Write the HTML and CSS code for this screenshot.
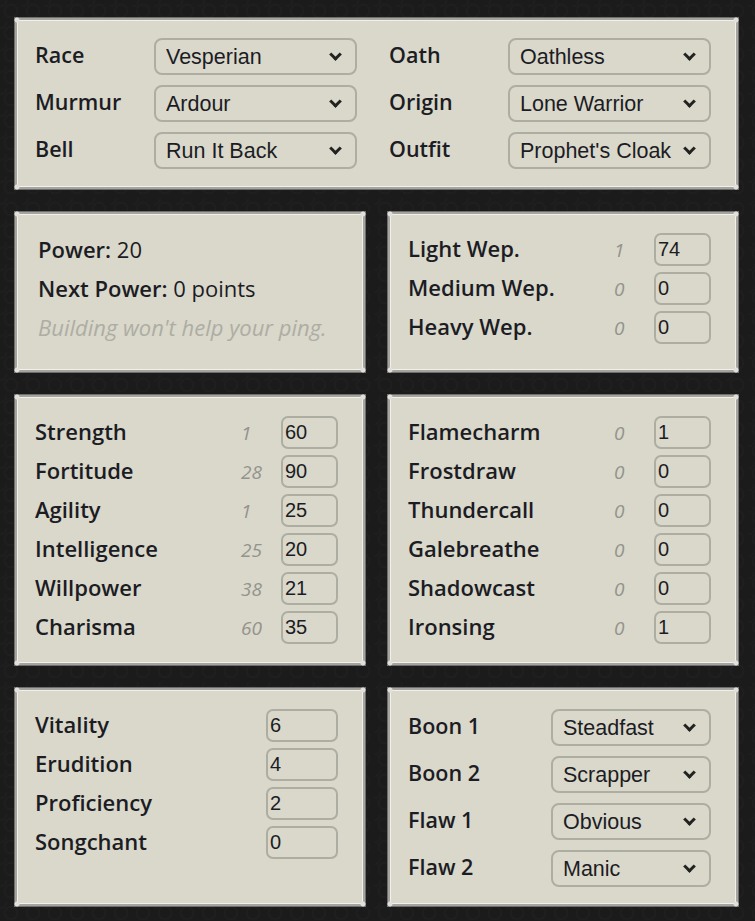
FILE: index.html
```html
<!DOCTYPE html>
<html lang="en">
<head>
  <meta charset="UTF-8" />
  <meta name="viewport" content="width=device-width, initial-scale=1.0"/>
  <title>Build Sheet</title>
  <link rel="stylesheet" href="styles.css">
</head>
<body>
  <div class="sheet">

    <!-- PICKS -->
    <section class="panel panel-wide">
      <div class="pick-grid">
        <div class="pick-col">
          <label class="pick"><span class="pick-name">Race</span><span class="select-wrap"><select><option>Vesperian</option></select></span></label>
          <label class="pick"><span class="pick-name">Murmur</span><span class="select-wrap"><select><option>Ardour</option></select></span></label>
          <label class="pick"><span class="pick-name">Bell</span><span class="select-wrap"><select><option>Run It Back</option></select></span></label>
        </div>
        <div class="pick-col">
          <label class="pick"><span class="pick-name">Oath</span><span class="select-wrap"><select><option>Oathless</option></select></span></label>
          <label class="pick"><span class="pick-name">Origin</span><span class="select-wrap"><select><option>Lone Warrior</option></select></span></label>
          <label class="pick"><span class="pick-name">Outfit</span><span class="select-wrap"><select><option>Prophet's Cloak</option></select></span></label>
        </div>
      </div>
    </section>

    <!-- POWER -->
    <section class="panel power">
      <div class="power-line"><strong>Power:</strong> 20</div>
      <div class="power-line"><strong>Next Power:</strong> 0 points</div>
      <div class="power-line hint">Building won't help your ping.</div>
    </section>

    <!-- WEAPONS -->
    <section class="panel stats">
      <div class="stat"><span class="stat-name">Light Wep.</span><span class="stat-req">1</span><input class="stat-input" value="74"></div>
      <div class="stat"><span class="stat-name">Medium Wep.</span><span class="stat-req">0</span><input class="stat-input" value="0"></div>
      <div class="stat"><span class="stat-name">Heavy Wep.</span><span class="stat-req">0</span><input class="stat-input" value="0"></div>
    </section>

    <!-- ATTRIBUTES -->
    <section class="panel stats">
      <div class="stat"><span class="stat-name">Strength</span><span class="stat-req">1</span><input class="stat-input" value="60"></div>
      <div class="stat"><span class="stat-name">Fortitude</span><span class="stat-req">28</span><input class="stat-input" value="90"></div>
      <div class="stat"><span class="stat-name">Agility</span><span class="stat-req">1</span><input class="stat-input" value="25"></div>
      <div class="stat"><span class="stat-name">Intelligence</span><span class="stat-req">25</span><input class="stat-input" value="20"></div>
      <div class="stat"><span class="stat-name">Willpower</span><span class="stat-req">38</span><input class="stat-input" value="21"></div>
      <div class="stat"><span class="stat-name">Charisma</span><span class="stat-req">60</span><input class="stat-input" value="35"></div>
    </section>

    <!-- ATTUNEMENTS -->
    <section class="panel stats">
      <div class="stat"><span class="stat-name">Flamecharm</span><span class="stat-req">0</span><input class="stat-input" value="1"></div>
      <div class="stat"><span class="stat-name">Frostdraw</span><span class="stat-req">0</span><input class="stat-input" value="0"></div>
      <div class="stat"><span class="stat-name">Thundercall</span><span class="stat-req">0</span><input class="stat-input" value="0"></div>
      <div class="stat"><span class="stat-name">Galebreathe</span><span class="stat-req">0</span><input class="stat-input" value="0"></div>
      <div class="stat"><span class="stat-name">Shadowcast</span><span class="stat-req">0</span><input class="stat-input" value="0"></div>
      <div class="stat"><span class="stat-name">Ironsing</span><span class="stat-req">0</span><input class="stat-input" value="1"></div>
    </section>

    <!-- INVESTMENTS -->
    <section class="panel stats stats-plain">
      <div class="stat"><span class="stat-name">Vitality</span><input class="stat-input" value="6"></div>
      <div class="stat"><span class="stat-name">Erudition</span><input class="stat-input" value="4"></div>
      <div class="stat"><span class="stat-name">Proficiency</span><input class="stat-input" value="2"></div>
      <div class="stat"><span class="stat-name">Songchant</span><input class="stat-input" value="0"></div>
    </section>

    <!-- BOONS / FLAWS -->
    <section class="panel traits">
      <label class="pick"><span class="pick-name">Boon 1</span><span class="select-wrap"><select><option>Steadfast</option></select></span></label>
      <label class="pick"><span class="pick-name">Boon 2</span><span class="select-wrap"><select><option>Scrapper</option></select></span></label>
      <label class="pick"><span class="pick-name">Flaw 1</span><span class="select-wrap"><select><option>Obvious</option></select></span></label>
      <label class="pick"><span class="pick-name">Flaw 2</span><span class="select-wrap"><select><option>Manic</option></select></span></label>
    </section>

  </div>
</body>
</html>
```

FILE: styles.css
```css
:root {
  --bg: #1b1b1b;
  --card: #d9d8cb;
  --text: #1c1c24;
  --line: #aeada2;
  --muted: #94938c;
}

body {
  margin: 0;
  font-family: 'Open Sans', 'Noto Sans', sans-serif;
  color: var(--text);
  background-color: var(--bg);
  background-image:
    radial-gradient(circle at 50% 50%, transparent 5px, #202020 6px, transparent 8px),
    radial-gradient(circle at 0 0, transparent 5px, #1f1f1f 6px, transparent 8px);
  background-size: 22px 22px;
}

.sheet {
  display: grid;
  grid-template-columns: 1fr 1fr;
  gap: 23px;
  padding: 18px 17px 14px 15px;
}

/* panels */
.panel {
  position: relative;
  background: var(--card);
  border: 2px solid #a6a49f;
  box-shadow: inset 0 0 0 1px #f1f0ea, 0 0 0 1px #6f6d6b;
  padding: 19px 25px 19px 18px;
}

.panel::before {
  content: "";
  position: absolute;
  inset: -4px;
  pointer-events: none;
  background:
    radial-gradient(circle, #e2e0dc 2px, transparent 3px) left top / 8px 8px no-repeat,
    radial-gradient(circle, #e2e0dc 2px, transparent 3px) right top / 8px 8px no-repeat,
    radial-gradient(circle, #e2e0dc 2px, transparent 3px) left bottom / 8px 8px no-repeat,
    radial-gradient(circle, #e2e0dc 2px, transparent 3px) right bottom / 8px 8px no-repeat;
}

.panel-wide {
  grid-column: 1 / -1;
  padding-top: 18px;
  padding-bottom: 18px;
}

/* selects */
.pick-grid {
  display: grid;
  grid-template-columns: 1fr 1fr;
  gap: 32px;
}

.pick-col, .traits {
  display: flex;
  flex-direction: column;
  gap: 10px;
}

.traits {
  padding-bottom: 17px;
}

.pick {
  display: grid;
  grid-template-columns: 119px 1fr;
  align-items: center;
}

.traits .pick {
  grid-template-columns: 143px 1fr;
}

.pick-name, .stat-name {
  font-size: 21.5px;
  font-weight: 600;
  padding-bottom: 5px;
}

.stat-name {
  font-size: 22px;
  padding-bottom: 3px;
}

.select-wrap {
  position: relative;
  display: block;
}

.select-wrap::after {
  content: "";
  position: absolute;
  right: 17px;
  top: 50%;
  width: 6px;
  height: 6px;
  margin-top: -7px;
  border-right: 3px solid #222;
  border-bottom: 3px solid #222;
  transform: rotate(45deg);
  pointer-events: none;
}

select {
  appearance: none;
  -webkit-appearance: none;
  display: block;
  width: 100%;
  height: 37px;
  padding: 0 30px 0 10px;
  border: 2px solid var(--line);
  border-radius: 8px;
  background: transparent;
  color: var(--text);
  font-family: 'Liberation Sans', Arial, sans-serif;
  font-size: 21.5px;
}

/* power */
.power {
  display: flex;
  flex-direction: column;
  gap: 6px;
  padding-left: 21px;
  padding-bottom: 26px;
}

.power-line {
  height: 33px;
  line-height: 33px;
  font-size: 22px;
}

.power-line strong {
  font-weight: 600;
}

.power-line.hint {
  font-style: italic;
  color: #aeada3;
}

/* stat rows */
.stats {
  display: flex;
  flex-direction: column;
  gap: 6px;
}

.stat {
  display: grid;
  grid-template-columns: 1fr 40px 57px;
  align-items: center;
}

.stats-plain .stat {
  grid-template-columns: 1fr 72px;
}

.stat-req {
  font-size: 19px;
  font-style: italic;
  color: var(--muted);
}

.stat-input {
  box-sizing: border-box;
  width: 100%;
  height: 33px;
  padding: 0 2px;
  border: 2px solid var(--line);
  border-radius: 7px;
  background: transparent;
  color: var(--text);
  font-family: 'Liberation Sans', Arial, sans-serif;
  font-size: 20px;
}
```
